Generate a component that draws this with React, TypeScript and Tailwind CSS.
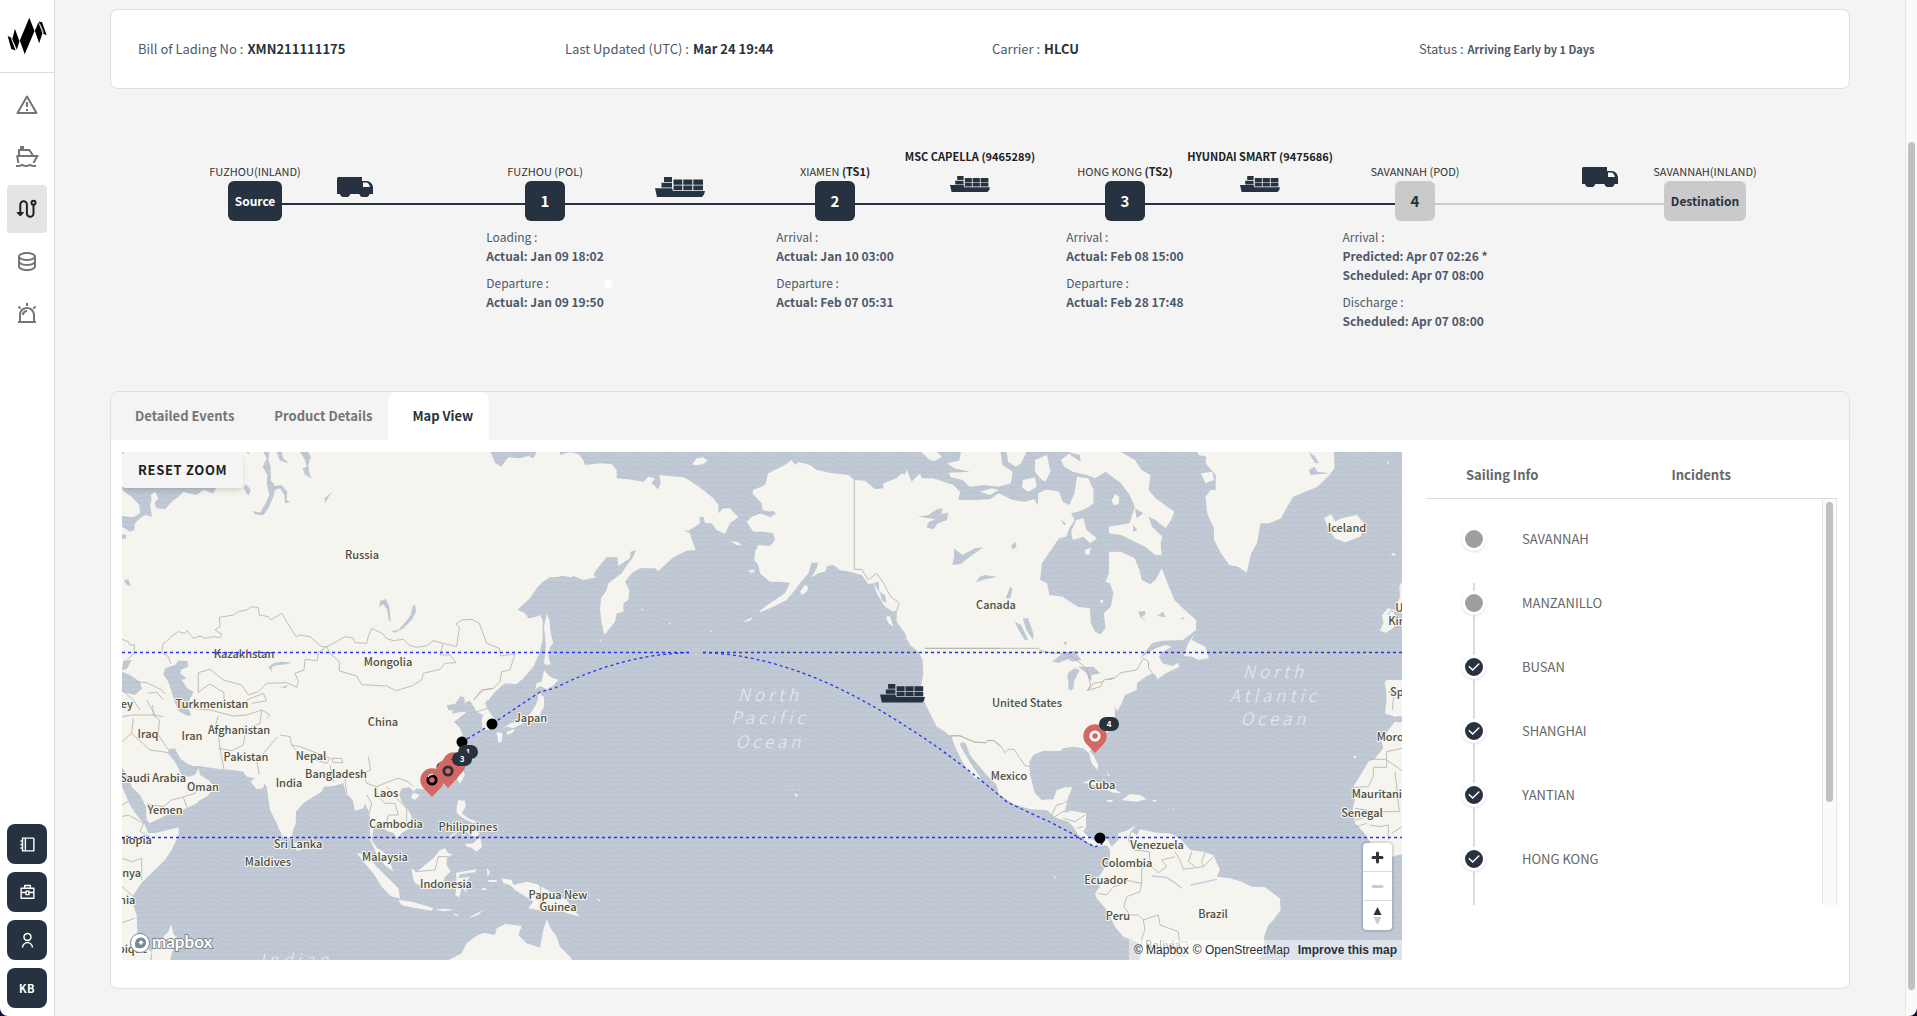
import { clsx } from "clsx";
import { RiAlarmWarningLine, RiAlertLine, RiBookletLine, RiBriefcase4Line, RiCheckLine, RiDatabase2Line, RiShip2Line, RiUserLine } from "react-icons/ri";

type Leg = { kind: "truck" | "ship" | "vessel"; label?: string; className: string };
type Stop = {
  name: string;
  tag?: string;
  badge: string;
  wide?: boolean;
  done: boolean;
  events: { title: string; lines: string[]; dot?: boolean }[];
};

const stops: Stop[] = [
  { name: "FUZHOU(INLAND)", badge: "Source", wide: true, done: true, events: [] },
  {
    name: "FUZHOU (POL)",
    badge: "1",
    done: true,
    events: [
      { title: "Loading :", lines: ["Actual: Jan 09 18:02"] },
      { title: "Departure :", lines: ["Actual: Jan 09 19:50"], dot: true },
    ],
  },
  {
    name: "XIAMEN",
    tag: "(TS1)",
    badge: "2",
    done: true,
    events: [
      { title: "Arrival :", lines: ["Actual: Jan 10 03:00"] },
      { title: "Departure :", lines: ["Actual: Feb 07 05:31"] },
    ],
  },
  {
    name: "HONG KONG",
    tag: "(TS2)",
    badge: "3",
    done: true,
    events: [
      { title: "Arrival :", lines: ["Actual: Feb 08 15:00"] },
      { title: "Departure :", lines: ["Actual: Feb 28 17:48"] },
    ],
  },
  {
    name: "SAVANNAH (POD)",
    badge: "4",
    done: false,
    events: [
      { title: "Arrival :", lines: ["Predicted: Apr 07 02:26 *", "Scheduled: Apr 07 08:00"] },
      { title: "Discharge :", lines: ["Scheduled: Apr 07 08:00"] },
    ],
  },
  { name: "SAVANNAH(INLAND)", badge: "Destination", wide: true, done: false, events: [] },
];

const legs: Leg[] = [
  { kind: "truck", className: "items-start pl-[92px]" },
  { kind: "ship", className: "items-center" },
  { kind: "vessel", label: "MSC CAPELLA (9465289)", className: "items-center pb-[5px]" },
  { kind: "vessel", label: "HYUNDAI SMART (9475686)", className: "items-center pb-[5px]" },
  { kind: "truck", className: "items-end pr-[77px] pb-[10px]" },
];

const ports = [
  { name: "SAVANNAH", done: false },
  { name: "MANZANILLO", done: false },
  { name: "BUSAN", done: true },
  { name: "SHANGHAI", done: true },
  { name: "YANTIAN", done: true },
  { name: "HONG KONG", done: true },
];

// Each tile is drawn on its own grid, three units to a map pixel
const tiles = [
  {
    transform: "translate(100 380) scale(.33333)",
    land: "M66 216H1380V960H66Z",
    water:
      "M66 216H350V230H66Z M66 322H350L340 340L310 330L290 345L265 340L250 335L235 350L215 365L195 388L170 385L163 370L175 355L165 335L152 345L155 360L150 375L156 410L135 405L120 415L105 430L103 450L90 455L66 440V408L100 412L120 400L118 375L95 350L66 330Z M440 216L446 216L446 225Z M438 312L453 330L445 347L430 325Z M66 462L80 465L76 476L66 476Z M490 216H508L505 240L512 260V300L525 318L545 315L562 335L560 360L570 365L555 370L553 345L540 325L525 330L520 350L505 385L490 406L465 403L458 393L480 398L497 370L508 345L500 310L502 285L488 260L500 235Z M530 216H545L550 235L567 250L540 242Z M600 216H625L632 230L625 255L628 280L635 295L615 285L608 265L620 260L615 240Z M698 335L685 352L676 370L674 355L685 345Z M72 600L85 598L92 618L80 615Z M1172 216H1310L1300 235L1285 228L1260 235L1225 232L1215 245L1203 260L1185 248Z M1370 216H1380V222Z M945 672L948 695L935 720L910 745L885 758L872 754L895 750L920 722L932 705L938 680Z M840 662L858 657L868 680L872 725L866 720L862 690L850 672L838 682Z M190 885L195 865L225 855L235 842L262 842L265 860L245 868L240 880L260 895L245 900L262 925L280 935L270 960H222L215 935L205 905Z M66 875L90 885L120 905L126 925L105 945L66 935Z M70 842L95 840L80 868L66 870Z M505 862L520 850L545 845L575 848L560 853L530 856L515 862L516 875Z M540 922L565 916L558 924Z M1382 590L1350 592L1328 605L1310 625L1290 655L1262 680L1253 690L1275 700L1285 715L1305 712L1320 705L1328 720V780L1318 820L1300 860L1270 895L1250 912L1215 910L1185 935L1165 961H1382Z M1070 955L1085 945L1095 955L1090 960H1070Z",
    border:
      "M66 778L85 785L90 795L104 795L102 820L80 840 M185 818L190 790L200 785L213 770L235 755L255 760L262 752L280 775L300 768L315 775L340 770L360 773L365 763L345 750L360 740L358 712L400 705L415 695L440 690L455 680L475 683L478 705L505 710L512 720L545 700L560 725L588 770L600 765L630 770L665 800L680 800L700 790L735 770L758 773L765 788L800 790L805 768L815 745L850 762L858 775L880 782L910 778L930 797L950 802L980 797L1000 782L1030 790L1020 825L1050 825L1068 848L1035 850L1020 868L970 880L965 900L935 918L888 932L860 918L785 914L770 888L718 873V845L690 820L680 800L655 817L652 842L615 838L612 870L585 880L595 905L590 922L560 908L500 910L475 935L445 945L425 915L370 900L330 868L295 878V938 M1030 790L1070 800L1078 742L1068 732L1085 720L1115 718L1138 730L1160 790L1198 805L1202 828L1245 822L1230 870L1205 875L1200 905L1180 925L1150 930L1120 960 M185 818L205 830L213 852 M105 905L140 908L185 930L195 942 M145 940L170 936L190 960 M295 938L310 925L330 912L350 925L372 938V960",
  },
  {
    transform: "translate(100 680) scale(.33333)",
    land: "M66 50H200L222 60L235 92L262 108L274 104L262 82L272 50H1170L1155 70L1165 90L1182 115L1185 135L1165 150L1148 148L1145 120L1150 105L1130 95L1118 75L1110 62L1090 70L1100 55L1085 45L1065 72L1040 75L1045 90L1060 92L1055 102L1075 97L1100 95L1085 108L1062 125L1080 145L1088 165L1080 178L1100 185L1102 215L1098 235L1085 260L1060 290L1045 300L1020 310L1000 320L965 328L950 325L940 335L930 322L905 325L898 345L905 365L925 390L935 410V440L905 460L892 477L885 465L880 458L865 455L850 445L845 432L830 425L820 450L815 480L832 505L850 515L865 530L875 560L880 573L860 560L835 535L822 505L808 475L812 440L808 400L795 370L790 385L765 392L758 360L738 340L730 310L700 318L672 320L665 335L640 350L610 370L588 395L587 430L578 455L575 475L548 472L530 430L510 390L503 340L500 320L492 310L490 325L470 328L452 305L465 295L440 290L430 275L400 270L365 268L320 262L300 258L280 258L260 250L240 235L225 205L205 208V222L225 245L235 265L245 285L265 290L285 285L296 265L300 285L325 300L345 322L320 350L300 360L290 370L260 385L200 405L150 430L140 420L138 380L120 345L95 320L90 300L66 262Z M66 320L90 375L110 405L135 435L145 460L170 458L236 442V465L215 510L195 540L125 608L100 645L98 670L110 705L112 760L130 800L155 815L150 840H66Z M213 733L222 765L230 770L222 800L210 840H155L158 800L180 785L195 765L205 755Z M580 485L600 495L605 510L590 512Z M770 518L800 525L830 560L865 595L895 625L900 655L875 650L845 620L820 580L790 545Z M895 660L935 665L960 672L1000 685L995 692L940 683L905 675Z M1005 688L1040 686L1060 690L1030 694Z M1060 700L1078 706L1068 708Z M1108 712L1150 690L1135 704L1115 712Z M935 565L950 575L975 555L1000 535L1020 510L1035 505L1045 520L1058 522L1040 535L1040 555L1052 575L1035 590L1025 620L980 625L945 610L938 590Z M1068 578L1130 568L1125 577L1080 583L1075 595L1110 590L1095 610L1100 640L1085 620L1078 652L1066 645L1070 610Z M1160 565L1170 575L1163 592Z M1165 600H1190V606H1165Z M1145 625H1158V630H1145Z M1075 360L1095 362L1097 380L1085 400L1105 415L1130 425L1120 430L1090 415L1070 400L1070 380Z M1095 492L1120 490L1140 470L1146 500L1130 515L1115 503L1100 500Z M1100 455L1120 450L1140 460L1130 470L1110 465Z M1075 455L1035 485L1060 460Z M1090 268L1094 285L1080 312L1070 295Z M940 338L960 345L945 360L932 352Z M1318 35L1330 55L1332 80L1318 105L1300 122L1270 130L1240 145L1220 140L1200 150L1235 128L1270 122L1295 95L1310 70L1315 50Z M1190 155L1208 160L1205 185L1195 188L1192 170Z M1220 155L1245 146L1238 158L1222 164Z M1205 595L1235 600L1240 615L1280 605L1310 612L1360 640L1400 660L1420 690L1440 710L1400 700L1370 680L1330 692L1285 685L1300 665L1270 645L1245 630L1230 615L1210 610Z M1440 662L1465 640L1458 658Z M1490 655L1500 660V667Z M1045 840L1085 820L1100 790L1125 770L1150 758L1185 765L1190 745L1215 732L1265 738L1255 765L1280 790L1320 803L1330 750L1340 718L1352 745L1370 770L1380 800L1415 835V840Z",
    water: "",
    border:
      "M66 110L95 105L160 105L190 110 M158 75L160 105L178 120L175 165L195 195L205 208 M66 185L95 160L100 115 M95 160L150 210L205 218 M355 108L345 140L355 165L360 205L372 268 M355 205L395 212L430 195L435 165L455 140L480 130L485 90L440 105L400 108L330 90L275 85 M485 90L510 105L500 115 M530 172L500 210L470 240L478 285 M575 195L600 200L690 235L680 250L600 225L575 195L570 170L540 165 M695 235L725 235L728 248L700 248Z M690 255L700 305 M740 340L735 300L745 275 M805 230L812 270L790 280L800 310L830 320L830 345L855 370L885 370L895 405L865 405L860 425 M830 320L865 305L895 295L925 305L940 320 M860 320L880 345L920 385L920 430L890 435 M808 400L815 370L800 345 M945 575L1005 570L1015 530L1045 530 M1322 615V690 M1120 60L1145 30L1180 25 M1130 95L1165 85 M140 372L190 380L215 360L245 352L285 340L300 310 M250 352L262 385 M66 375L85 365 M66 410L85 405L130 430L120 455L150 470 M66 535L95 545L125 535V600 M66 620L100 650 M66 728L105 715 M66 30L100 60L120 90 M140 60L165 105 M440 60L490 40L500 62L455 70",
  },
  {
    transform: "translate(540 440) scale(.33333)",
    land: "M0 36H45L60 45L90 36L115 42L130 60L135 75L180 70L215 72L230 90V115L265 118L310 125L325 110L345 115L335 130L355 148L362 130L358 105L385 108L430 112L450 122L490 150L520 175L535 195V220L550 205L570 205L595 232L570 250L555 282L530 270L515 250L495 248L490 230L478 232L480 250L465 260L445 272L430 270L450 280L458 305L467 330L440 332L400 352L355 393L345 385L300 385L275 400L255 425L268 450L265 480L250 490V515L230 520L225 545L205 570L193 585L185 550L180 510L183 475L200 450L205 430L245 400L265 370L280 350L288 330L272 335L270 355L235 378L232 352L200 352L185 370L165 395L160 405L170 412L130 420L100 408L95 412L70 408L60 409V36Z M458 70L470 55L490 52L503 62L490 72L475 75L460 75Z M572 304L595 306L605 316L590 315Z M20 520L28 540L32 580L40 610L30 620L25 650L32 672L20 675L12 670L18 620L12 560Z M12 690L30 710L55 720L38 738L20 748L0 738L-14 748L-10 728L5 725Z M-5 765L12 770V800L0 808Z M176 605L186 595L182 604Z M304 502L310 510L306 512Z M608 547L638 530L630 542Z M755 60L765 75L775 66L810 75L830 90L870 98L925 105L943 120L975 122L1005 148L1030 145L1030 130L1070 115L1085 100L1095 105L1100 88L1115 125L1140 100L1145 115L1180 115L1240 135L1260 155L1255 180L1310 180L1345 178L1380 190V1065L1370 1025L1330 975L1300 940L1285 915L1265 903L1258 915L1280 950L1295 975L1320 1010V1020L1300 1010L1290 985L1265 960L1255 930L1235 890L1230 880L1190 860L1175 830L1155 790L1143 740L1150 700L1148 660L1135 635L1110 615L1095 580L1070 545V510L1060 515L1035 500L1010 460L1000 430L985 432L965 405L930 395L900 390L880 375L862 378L855 395L835 400L815 412L830 385L835 368L815 368L805 400L780 430L765 450L740 480L700 500L660 517L658 514L690 490L735 460L750 428L720 425L690 425L660 400L655 375L643 360L645 335L655 315L690 318L705 300L700 280L670 275L640 275L620 245L635 230L665 220L690 232L708 220L668 210L665 190L637 160L640 150L675 135L685 100L715 85L735 75Z M780 455L795 435L805 440L800 455L785 465Z M625 392L640 388L645 397L630 398Z M1038 530L1050 528L1060 560L1045 550Z M1095 592L1120 600L1165 635L1140 630L1110 610Z M763 1058L775 1065L768 1072Z M735 1038L740 1040L737 1041Z M755 1048L760 1051L756 1052Z M386 549H391V552H386Z M510 572H516V575H510Z",
    water: "M1000 430L1015 425L1018 455L1035 465L1040 490L1025 480L1020 460Z M658 222L700 212L708 222L690 226Z",
    border:
      "M943 120V388H965L985 420L1010 400L1030 428L1052 470L1077 488L1070 515 M1157 625H1380 M1230 888L1258 886L1303 907L1338 908L1342 902H1362L1380 920",
  },
  {
    transform: "translate(880 440) scale(.34435 .33333)",
    land: "M300 178L312 205L316 180L345 160L385 180L420 185L448 178L458 195L460 160L480 150L495 150L520 155L530 185L550 195L565 160L572 110L605 115L620 150V190L600 205L575 215L555 220L565 240L550 265L540 290L520 295L490 340L470 370L465 420L485 430L492 465L530 470L575 500L610 505L612 550L625 575L640 583L655 565L650 520L670 500L678 460L668 430L655 425L665 400V335L700 335L740 355L755 395L760 420L785 433L800 420L818 385L835 430L855 480L885 510L918 540V570L880 600L820 602L790 610L755 655L800 625L830 615L848 620L820 635L810 650L820 670L850 678L865 668L870 680L830 700L805 718L800 705L790 700L765 715L745 730V750L710 765L690 800V812L680 790L682 830L660 870L640 900H300Z M922 36H1318L1320 85L1305 105L1270 140L1200 170L1180 205L1165 235L1130 250L1105 250L1095 310L1078 340L1065 398L1040 380L1015 375L990 340L970 300V265L950 220L945 170L960 150L975 150V105L945 70L948 50L925 45Z M932 100L965 95L970 120L945 130Z M1290 235L1310 222L1322 245L1340 235L1385 225L1410 255L1395 290L1350 307L1320 295L1305 270Z M1516 425L1508 440L1510 470L1500 495L1516 520Z M1475 505L1495 510V560L1470 578L1452 572L1462 550L1458 525Z M1465 725L1516 720V830L1470 822L1475 780Z M1516 845L1500 850L1485 880L1480 900H1516Z M1472 68L1478 64V72Z M1486 340H1496V346H1486Z M555 36H700L740 60L760 90L785 105L780 150L800 175L855 215L845 240L830 265L800 240L780 230L790 260L820 290L815 310L818 345L800 345L770 320L740 305L700 285L665 280V260L695 255L725 250L740 200L725 165L700 130L655 95L625 115L600 105L560 95L535 80L525 60Z M570 240L590 235L600 270L630 295L610 310L590 290L560 300L555 275Z M683 162L695 172L693 192L680 196L672 182Z M595 330L612 322L608 345L595 342Z M120 36H165L180 50L160 62L145 60Z M235 36H350L355 75L385 95L380 130L345 140L300 135L260 140L240 120L205 112L200 98L262 95L215 85L195 70L230 62Z M415 120L450 112L455 140L430 155L412 142Z M368 36H425L410 70L395 80L372 66Z M450 60L485 45L495 95L480 125L465 115L450 95Z M290 155L325 145L345 150L320 165Z M918 575L905 600L945 620L955 655L925 660L905 650L882 648L895 610Z M640 480H648V488H640Z",
    water:
      "M110 230L140 225L165 208L182 205L178 222L198 218L195 240L168 250L155 268L135 262L140 248L160 237Z M215 325L240 345L275 325L300 322L275 340L255 355L235 372L210 375L215 350Z M277 428L290 410L305 405L340 411L305 418Z M500 665L530 640L565 632L585 660L560 665L545 658L520 668Z M545 700L565 685L580 690L565 720L562 750L550 748L545 720Z M575 680L620 680L640 700L615 705L612 730L600 700Z M600 752L615 738L648 730L640 742Z M645 722L682 710L670 722Z M532 608L543 604L540 617Z M415 535L430 535L445 580V600L425 570Z M392 545L410 555L430 600H420L400 565Z M378 440L385 448L378 475L365 475Z M380 318L392 305L397 320L385 328Z M750 515L770 512V525L760 530L775 548L755 530Z M805 528L822 515L830 532Z M870 538L885 530L880 538Z M522 238L540 250L535 256Z M740 205L765 220L745 235Z M735 255L748 270L735 275Z M1245 90L1262 80L1270 95L1305 100L1250 105Z M1245 36L1262 48L1275 70L1262 68Z M545 36L580 45L583 65L560 50Z",
    border:
      "M130 625H460L467 632L500 640L545 640L600 685L612 735L602 752L640 740L650 720L680 715L700 698L745 690L765 655L780 665V685L792 700 M1475 755L1492 760L1488 810 M1475 525L1485 510L1498 525",
  },
  {
    transform: "translate(940 680) scale(.33333)",
    land: "M0 0H600L590 10V30L555 45L545 70L535 88L530 92L524 75V110L510 150L480 175L455 200L450 215L460 225L475 255L472 270L455 250L447 220L430 205L400 200L370 205L360 213L310 212L280 225L268 245L270 285L285 340L305 360L340 358L350 330L375 322L397 322L385 350L380 370L375 393L400 393L438 400V440L430 455L450 475L470 485L500 475L515 500L512 512L500 495L470 500L440 485L415 465L400 440L385 425L345 412L320 390L270 388L220 372L195 355L175 340L170 315L140 285L110 250L90 225L75 185L58 190L75 225L100 270L122 300L105 295L75 260L60 230L45 200L35 170L0 145Z M510 505L535 480V460L560 452L585 437L575 455L590 465L600 448L620 452L650 458L690 460L720 475L750 510L790 515L820 525L840 570L830 590L870 595L905 605L935 620L975 622L1020 655L1022 690L1000 720L985 735L972 770L975 810L955 840H600L605 800L600 790L550 770L525 740L500 690L470 655L465 640L480 620L470 600L490 570L510 545Z M425 310L450 300L500 315L545 340L520 338L480 320L440 310Z M545 360L570 342L600 345L620 358L590 365Z M500 360H520L515 366H503Z M635 360H651L645 365Z M500 275L510 287L505 288Z M1338 0H1386V105L1365 110L1335 100L1340 60Z M1386 130L1365 125L1345 150L1325 185L1330 205L1305 235L1285 245L1265 280L1240 320L1245 360L1238 385L1245 430L1270 455L1290 485L1330 525L1350 532L1386 522Z M1242 228H1248V234H1242Z M340 588L348 592L344 598Z M698 386H702V389H698Z",
    water: "M385 0H403L400 25L392 32L385 25Z",
    border:
      "M32 168H60L103 186L138 188L142 181H160L180 195L195 218L205 208H222L255 257L270 260 M335 405L350 375L370 370L380 362 M370 415L405 425L435 405 M345 410L368 395H385 M410 445L430 440 M575 450L565 480L580 510L628 515L630 555L655 578L680 560L665 540L705 530 M705 515L720 540L730 568L790 560L820 530 M755 515L745 545L765 560 M795 518L785 545L790 560 M630 555L605 565V610L555 600 M605 610L600 635L560 650L552 680L570 705H595L610 720L655 705L660 735L715 755L718 785H740L745 810 M475 640L500 645L520 620L555 610 M610 720L615 750L605 775V800 M695 840L705 825L740 830 M1290 238H1340V215L1386 205 M1340 240L1386 272 M1340 240V262H1300V290L1285 320L1240 322 M1365 275L1378 395H1320 M1245 385L1280 390L1285 410L1245 420 M1290 435L1320 440L1345 435V480 M1250 440L1280 430 M1386 440L1355 460 M445 30L460 10L490 5",
  },
];

const rivers = "M635 588L680 592L705 608L725 625 M752 615L800 605L830 598";

const countries: [string, number, number][] = [
  ["Russia", 362, 559],
  ["Kazakhstan", 244, 658],
  ["Mongolia", 388, 666],
  ["Turkmenistan", 212, 708],
  ["China", 383, 726],
  ["Japan", 531, 722],
  ["Iraq", 148, 738],
  ["Iran", 192, 740],
  ["Afghanistan", 239, 734],
  ["Pakistan", 246, 761],
  ["Nepal", 311, 760],
  ["Bangladesh", 336, 778],
  ["India", 289, 787],
  ["Saudi Arabia", 153, 782],
  ["Oman", 203, 791],
  ["Yemen", 165, 814],
  ["Laos", 386, 797],
  ["Cambodia", 396, 828],
  ["Philippines", 468, 831],
  ["Sri Lanka", 298, 848],
  ["Maldives", 268, 866],
  ["Malaysia", 385, 861],
  ["Indonesia", 446, 888],
  ["Papua New", 558, 899],
  ["Guinea", 558, 911],
  ["Ethiopia", 130, 844],
  ["Kenya", 125, 877],
  ["Tanzania", 112, 904],
  ["Mozambique", 114, 953],
  ["Turkey", 115, 708],
  ["United States", 1027, 707],
  ["Mexico", 1009, 780],
  ["Cuba", 1102, 789],
  ["Venezuela", 1157, 849],
  ["Colombia", 1127, 867],
  ["Ecuador", 1106, 884],
  ["Peru", 1118, 920],
  ["Brazil", 1213, 918],
  ["Mauritania", 1380, 798],
  ["Senegal", 1362, 817],
  ["Morocco", 1399, 741],
  ["Spain", 1405, 696],
  ["Iceland", 1347, 532],
  ["Canada", 996, 609],
  ["United", 1413, 612],
  ["Kingdom", 1412, 625],
];

const oceans: [string, number, number][] = [
  ["North", 770, 701],
  ["Pacific", 770, 724],
  ["Ocean", 770, 748],
  ["North", 1275, 678],
  ["Atlantic", 1275, 702],
  ["Ocean", 1275, 725],
  ["Indian", 296, 966],
];

function Logo() {
  return (
    <svg viewBox="20 50 122 116" className="w-10 h-[38px]">
      <path d="M88 52L104 93L74 164L59 122Z M44 86L58 124L50 150L36 118Z M22 108L33 113L46 152L33 148Z M118 130L105 92L116 66L128 100Z M117 64L127 66L141 106L131 101Z" />
      <path d="M33 115L44 142M121 72L132 98" stroke="#fff" strokeWidth="2" />
    </svg>
  );
}

function RouteIcon() {
  return (
    <svg viewBox="0 0 24 24" className="size-6" fill="none" stroke="currentColor" strokeWidth="2">
      <path d="M5.300 16V7.500a3.300 3.300 0 0 1 6.600 0v9a3.300 3.300 0 0 0 6.600 0V8" />
      <circle cx="18.500" cy="5.700" r="2" />
      <path d="M2 15.500h6.600L5.300 19Z" fill="currentColor" strokeWidth="1" />
    </svg>
  );
}

function Truck() {
  return (
    <svg viewBox="0 0 36 20" className="w-9 h-5" fill="#273240">
      <path
        fillRule="evenodd"
        d="M1.500 0H25v4h5c3.500 0 6 4 6 6.500V17h-3.300a5.500 5.500 0 0 1-10.400 0h-9a5.500 5.500 0 0 1-10.400 0H0V1.500A1.500 1.500 0 0 1 1.500 0ZM26 5.500V10h7c-.6-2.500-2-4.500-4-4.500Z"
      />
    </svg>
  );
}

const shipShape =
  "M9 0h8v5H9Z M6.500 5.800h10.500v4.700H6.500Z M0 11.200h17l1 2.800H50l-1 3.500-2 2.500H2Z M18.500 2.500h8.800v5.200h-8.800Z M28.300 2.500h9v5.200h-9Z M38.300 2.500h9.700v5.200h-9.700Z M18.500 8.500h8.800v4.700h-8.800Z M28.300 8.500h9v4.700h-9Z M38.300 8.500h9.700v4.700h-9.700Z";

function Ship({ className }: { className: string }) {
  return (
    <svg viewBox="0 0 50 20" className={className} fill="#273240">
      <path d={shipShape} />
    </svg>
  );
}

function Sidebar() {
  const links = [
    { label: "Alerts", icon: <RiAlertLine size={24} /> },
    { label: "Vessels", icon: <RiShip2Line size={24} /> },
    { label: "Tracking", icon: <RouteIcon />, active: true },
    { label: "Data", icon: <RiDatabase2Line size={24} /> },
    { label: "Alarms", icon: <RiAlarmWarningLine size={24} /> },
  ];

  const tools = [
    { label: "Notebook", icon: <RiBookletLine size={17} /> },
    { label: "Work", icon: <RiBriefcase4Line size={17} /> },
    { label: "Account", icon: <RiUserLine size={17} /> },
    { label: "KB", icon: <span className="text-[11px] font-bold tracking-wider">KB</span> },
  ];

  return (
    <aside className="flex flex-col w-[55px] shrink-0 bg-white border-r border-[#dcdcdc] rounded-bl-lg">
      <a href="#" aria-label="Home" className="flex items-center justify-center h-[73px] border-b border-[#dcdcdc]">
        <Logo />
      </a>
      <nav className="flex flex-col items-center gap-1 pt-2">
        {links.map((link) => (
          <a
            key={link.label}
            href="#"
            aria-label={link.label}
            className={clsx(
              "flex items-center justify-center w-10 h-12 rounded",
              link.active ? "bg-[#e4e4e4] text-[#212121]" : "text-[#757575]"
            )}
          >
            {link.icon}
          </a>
        ))}
      </nav>
      <div className="flex flex-col items-center gap-2 mt-auto pb-2">
        {tools.map((tool) => (
          <button
            key={tool.label}
            type="button"
            aria-label={tool.label}
            className="flex items-center justify-center size-10 rounded-lg bg-[#273240] text-white"
          >
            {tool.icon}
          </button>
        ))}
      </div>
    </aside>
  );
}

function Summary() {
  return (
    <dl className="grid grid-cols-4 gap-6 items-center h-20 px-[27px] bg-white border border-[#e0e0e0] rounded-lg text-[13px] text-[#4f5968]">
      <div className="flex gap-1 items-center">
        <dt>Bill of Lading No :</dt>
        <dd className="font-bold text-[#273240]">XMN211111175</dd>
      </div>
      <div className="flex gap-1 items-center">
        <dt>Last Updated (UTC) :</dt>
        <dd className="font-bold text-[#273240]">Mar 24 19:44</dd>
      </div>
      <div className="flex gap-1 items-center">
        <dt>Carrier :</dt>
        <dd className="font-bold text-[#273240]">HLCU</dd>
      </div>
      <div className="flex gap-1 items-center">
        <dt>Status :</dt>
        <dd className="font-bold text-[11px] text-[#4f5968]">Arriving Early by 1 Days</dd>
      </div>
    </dl>
  );
}

function Rail({ state }: { state: "done" | "todo" | "none" }) {
  return (
    <span
      className={clsx("flex-1 h-0.5 mt-1.5", state === "done" && "bg-[#273240]", state === "todo" && "bg-[#cacaca]")}
    />
  );
}

function Timeline() {
  return (
    <section className="relative h-[302px] pt-[72px]">
      <ol className="grid grid-cols-6">
        {stops.map((stop, i) => (
          <li key={stop.name} className="flex flex-col">
            <p className="text-center text-[11px] leading-5 text-[#333]">
              {stop.name} {stop.tag && <b className="text-[#222]">{stop.tag}</b>}
            </p>
            <div className="flex items-center">
              <Rail state={i === 0 ? "none" : i < 5 ? "done" : "todo"} />
              <span
                className={clsx(
                  "flex items-center justify-center h-10 rounded-md font-bold",
                  stop.wide ? "px-[7px] text-[12px]" : "w-10 text-[15px]",
                  stop.done ? "bg-[#273240] text-white" : "bg-[#cacaca] text-[#273240]"
                )}
              >
                {stop.badge}
              </span>
              <Rail state={i === 5 ? "none" : i < 4 ? "done" : "todo"} />
            </div>
            <div className="flex flex-col gap-[8px] w-fit mx-auto mt-[6px] text-[12px] leading-[19px] text-[#4f5968]">
              {stop.events.map((event) => (
                <div key={event.title} className="relative">
                  <p>{event.title}</p>
                  {event.lines.map((line) => (
                    <p key={line} className="font-bold">{line}</p>
                  ))}
                  {event.dot && <span className="absolute left-full top-1.5 size-[9px] rounded-full bg-white" />}
                </div>
              ))}
            </div>
          </li>
        ))}
      </ol>

      <div className="absolute inset-x-0 top-0 grid grid-cols-5 h-[108px] pl-[135px] pr-[155px]">
        {legs.map((leg, i) => (
          <div key={i} className={clsx("flex flex-col justify-end", leg.className)}>
            {leg.label && (
              <p className="text-[11px] leading-6 mb-2 font-bold text-[#212121] whitespace-nowrap">{leg.label}</p>
            )}
            {leg.kind === "truck" && <Truck />}
            {leg.kind === "ship" && <Ship className="w-[50px] h-5" />}
            {leg.kind === "vessel" && <Ship className="w-10 h-4" />}
          </div>
        ))}
      </div>
    </section>
  );
}

function Pin({ x, y, ring = "#fff" }: { x: number; y: number; ring?: string }) {
  return (
    <g transform={`translate(${x} ${y})`}>
      <path d="M0 17L-9 7.500A11.700 11.700 0 1 1 9 7.500Z" fill="#d26763" />
      <circle r="4.200" fill="none" stroke={ring} strokeWidth="2.800" />
    </g>
  );
}

function Badge({ x, y, text }: { x: number; y: number; text: string }) {
  return (
    <g>
      <rect x={x - 10} y={y - 7} width="20" height="14" rx="7" fill="#273240" />
      <text x={x} y={y + 3} textAnchor="middle" fill="#fff" className="text-[8px] font-bold">{text}</text>
    </g>
  );
}

function WorldMap() {
  return (
    <div className="relative flex-1 min-w-0 overflow-hidden">
      <svg
        viewBox="122 452 1280 508"
        preserveAspectRatio="xMidYMid slice"
        className="block w-full h-[508px] bg-[#c1c9d5]"
        role="img"
        aria-label="Shipment route"
      >
        <defs>
          <pattern id="waves" width="11" height="5" patternUnits="userSpaceOnUse">
            <path d="M0 2.500Q2.750 1 5.500 2.500T11 2.500" fill="none" stroke="#b8c1ce" strokeWidth="1" />
          </pattern>
          <mask id="land" maskUnits="userSpaceOnUse" x="122" y="452" width="1280" height="508">
            {tiles.map((tile) => (
              <g key={tile.transform} transform={tile.transform}>
                <path d={tile.land} fill="#fff" />
                <path d={tile.water} fill="#000" />
              </g>
            ))}
          </mask>
        </defs>
        <rect x="122" y="452" width="1280" height="508" fill="#c1c9d5" />
        <rect x="122" y="452" width="1280" height="508" fill="url(#waves)" />
        <rect x="122" y="452" width="1280" height="508" fill="#f5f4ee" mask="url(#land)" />

        {tiles.map((tile) => (
          <path
            key={tile.transform}
            transform={tile.transform}
            d={tile.border}
            fill="none"
            stroke="#b4b3ab"
            strokeWidth="2.500"
            strokeLinejoin="round"
          />
        ))}
        <path transform="translate(940 680) scale(.33333)" d={rivers} fill="none" stroke="#c1c9d5" strokeWidth="4" />

        <g
          textAnchor="middle"
          fill="#4e4e40"
          stroke="#f8f7f2"
          strokeWidth="2"
          strokeLinejoin="round"
          paintOrder="stroke"
          className="text-[11px] font-medium"
        >
          {countries.map(([name, x, y]) => (
            <text key={name} x={x} y={y}>{name}</text>
          ))}
          <text x="1163" y="949" opacity=".7">Bolivia</text>
        </g>
        <g textAnchor="middle" fill="#e9edf3" className="text-[17px] italic tracking-[4px] font-light">
          {oceans.map(([name, x, y]) => (
            <text key={`${name}-${x}-${y}`} x={x} y={y}>{name}</text>
          ))}
        </g>

        <g fill="none" stroke="#2336ee" strokeWidth="1.300" strokeDasharray="3 3">
          <path d="M122 652.500H689 M703 652.500H1402 M122 837.500H1402" />
          <path d="M462 742L492 724L522 704L540 692L555 688Q620 655 689 652.500" />
          <path d="M703 652.500C780 655 850 690 907 727C945 751 975 775 1000 796L1007 802L1030 813L1050 822L1073 834L1087 843L1095 847L1102 844L1100 838" />
        </g>

        <path transform="translate(880 684) scale(.9 .93)" d={shipShape} fill="#273240" />
        <circle cx="462" cy="742" r="5.500" />
        <circle cx="492" cy="724" r="5.500" />
        <circle cx="1100" cy="838" r="5.500" />
        <circle cx="441" cy="767" r="4.500" fill="#273240" />
        <Pin x={454} y={764} ring="#273240" />
        <Pin x={448} y={771} ring="#273240" />
        <Pin x={432} y={780} ring="#000" />
        <path d="M428 777a5 5 0 0 1 5-2.500" fill="none" stroke="#fff" strokeWidth="1.200" />
        <Pin x={1095} y={736} />
        <Badge x={468} y={752} text="1" />
        <Badge x={462} y={759} text="3" />
        <Badge x={1109} y={724} text="4" />
      </svg>

      <button
        type="button"
        className="absolute left-0 top-0 h-9 px-4 bg-[#f5f5f5] rounded shadow-md text-[13px] font-bold tracking-wider text-[#212121]"
      >
        RESET ZOOM
      </button>

      <a href="#" aria-label="Mapbox logo" className="absolute left-2 bottom-1.5">
        <svg viewBox="0 0 88 22" className="block w-[88px] h-[22px]">
          <circle cx="10" cy="11" r="9.500" fill="#fff" stroke="#7d8794" strokeWidth="1" />
          <path d="M5.500 15.500C4 10 6 5.500 11 5.500a5 5 0 0 1 5 5c0 5-5 7-10.500 5Z" fill="#7d8794" />
          <path d="M11 7.500l1 2 2 1-2 1-1 2-1-2-2-1 2-1Z" fill="#fff" />
          <text
            x="22"
            y="16"
            fill="#fff"
            stroke="#7d8794"
            strokeWidth="2"
            strokeLinejoin="round"
            paintOrder="stroke"
            className="text-[17px] font-bold font-['Lato',sans-serif]"
          >
            mapbox
          </text>
        </svg>
      </a>

      <div className="absolute right-2.5 bottom-[30px] flex flex-col w-[29px] rounded bg-white ring-2 ring-black/10 divide-y divide-[#ddd]">
        <button type="button" aria-label="Zoom in" className="h-[29px] flex items-center justify-center">
          <svg viewBox="0 0 29 29" className="size-[29px]" stroke="#333" strokeWidth="3" strokeLinecap="round">
            <path d="M14.500 10v9M10 14.500h9" />
          </svg>
        </button>
        <button type="button" aria-label="Zoom out" className="h-[29px] flex items-center justify-center">
          <svg viewBox="0 0 29 29" className="size-[29px]" stroke="#ccc" strokeWidth="3" strokeLinecap="round">
            <path d="M10 14.500h9" />
          </svg>
        </button>
        <button type="button" aria-label="Reset bearing" className="h-[29px] flex items-center justify-center">
          <svg viewBox="0 0 29 29" className="size-[29px]">
            <path d="M10.500 14L14.500 6l4 8Z" fill="#333" />
            <path d="M10.500 16L14.500 24l4-8Z" fill="#ccc" />
          </svg>
        </button>
      </div>

      <p className="absolute right-0 bottom-0 flex gap-1 px-[5px] bg-white/50 font-['Liberation_Sans',sans-serif] text-[12px] leading-5 text-[#273240]">
        <a href="#">© Mapbox</a>
        <a href="#">© OpenStreetMap</a>
        <a href="#" className="font-bold ml-1">Improve this map</a>
      </p>
    </div>
  );
}

function SailingInfo() {
  return (
    <div className="w-[411px] shrink-0 text-[#666]">
      <div className="grid grid-cols-2 h-[47px] border-b border-[#dcdcdc] text-[13px] font-bold">
        <button type="button" className="text-left pl-10">Sailing Info</button>
        <button type="button" className="text-left pl-10">Incidents</button>
      </div>
      <div className="flex h-[406px] overflow-hidden">
        <ul className="flex-1 pt-2">
          {ports.map((port, i) => (
            <li key={port.name} className="flex items-center h-16 pl-9">
              <span className="flex flex-col items-center h-full">
                <span className={clsx("w-0.5", i === 0 && "flex-1", i === 1 && "h-2 mt-3 bg-[#dcdcdc]", i > 1 && "flex-1 bg-[#dcdcdc]")} />
                <span className={clsx("flex items-center justify-center size-6 rounded-full border-3 border-white shadow text-white", port.done ? "bg-[#273240]" : "bg-[#9e9e9e]")}>
                  {port.done && <RiCheckLine size={16} />}
                </span>
                <span className={clsx("w-0.5 flex-1", i > 0 && "bg-[#dcdcdc]")} />
              </span>
              <span className="pl-9 text-[13px]">{port.name}</span>
            </li>
          ))}
          <li className="pl-[47px]"><span className="block w-0.5 h-4 bg-[#dcdcdc]" /></li>
        </ul>
        <div className="w-[15px] px-[3px] pt-[3px] bg-[#fafafa] border-x border-[#e6e6e6]">
          <div className="h-[300px] rounded-full bg-[#c1c1c1]" />
        </div>
      </div>
    </div>
  );
}

export default function App() {
  const tabs = ["Detailed Events", "Product Details", "Map View"];

  return (
    <div className="flex min-h-screen bg-[#120838] font-['Noto_Sans_CJK_SC',sans-serif]">
      <Sidebar />

      <main className="flex-1 min-w-0 px-[55px] pt-[9px] pb-6 bg-[#f4f4f4]">
        <Summary />
        <Timeline />

        <section className="bg-white border border-[#e0e0e0] rounded-lg overflow-hidden">
          <div role="tablist" className="flex h-12 bg-[#f4f4f4]">
            {tabs.map((tab) => (
              <button
                key={tab}
                type="button"
                role="tab"
                aria-selected={tab === "Map View"}
                className={clsx(
                  "pl-6 pr-4 rounded-t-lg text-[13px] font-bold",
                  tab === "Map View" ? "bg-white text-[#273240]" : "text-[#757575]"
                )}
              >
                {tab}
              </button>
            ))}
          </div>
          <div className="flex gap-6 pl-[11px] pr-3 pt-3 pb-7">
            <WorldMap />
            <SailingInfo />
          </div>
        </section>
      </main>

      <div className="w-3 shrink-0 px-[2px] pt-[142px] bg-[#fafafa] border-l border-[#e6e6e6] rounded-br-lg">
        <div className="h-[848px] rounded-full bg-[#c1c1c1]" />
      </div>
    </div>
  );
}
